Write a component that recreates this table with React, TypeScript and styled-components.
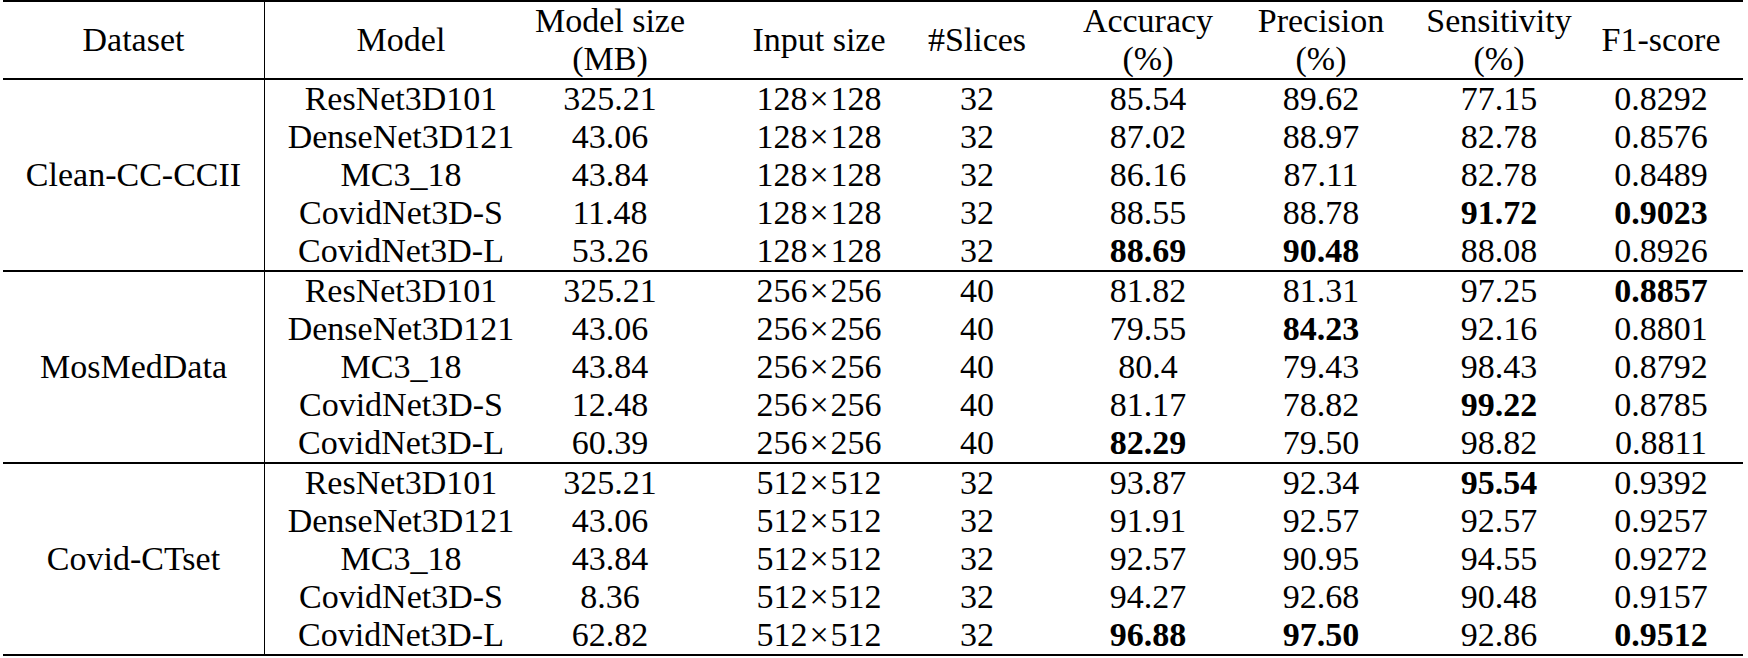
import React from "react";
import styled, { createGlobalStyle } from "styled-components";

const GlobalStyle = createGlobalStyle`
  html, body { margin: 0; padding: 0; background: #ffffff; }
  body {
    font-family: "Liberation Serif", "Times New Roman", serif;
    color: #000000;
  }
`;

type Col = { center: number; width: number };

const LEFT = 3;
const LINE = 265;
const END = 1743;
const ROW_H = 38;

const COLS: Col[] = [
  { center: 401, width: 250 },
  { center: 610, width: 160 },
  { center: 819, width: 150 },
  { center: 977, width: 110 },
  { center: 1148, width: 140 },
  { center: 1321, width: 140 },
  { center: 1499, width: 156 },
  { center: 1661, width: 130 },
];

const TEMPLATE = (() => {
  const parts: string[] = [];
  let pos = LINE;
  COLS.forEach((c) => {
    const s = c.center - c.width / 2;
    parts.push(`${s - pos}px`, `${c.width}px`);
    pos = s + c.width;
  });
  parts.push(`${END - pos}px`);
  return parts.join(" ");
})();

const Table = styled.div`
  margin-left: ${LEFT}px;
  width: ${END - LEFT}px;
  border-top: 2px solid #000;
  border-bottom: 2px solid #000;
  font-family: "Liberation Serif", "Times New Roman", serif;
  font-size: 34px;
  line-height: ${ROW_H}px;
  color: #000;
`;

const HeaderRow = styled.div`
  display: flex;
  height: ${ROW_H * 2}px;
  border-bottom: 2px solid #000;
`;

const Group = styled.div<{ $last?: boolean }>`
  display: flex;
  border-bottom: ${(p) => (p.$last ? "none" : "2px solid #000")};
`;

const DatasetCell = styled.div`
  box-sizing: border-box;
  width: ${LINE - LEFT}px;
  flex: none;
  border-right: 1.5px solid #000;
  display: flex;
  align-items: center;
  justify-content: center;
  white-space: nowrap;
`;

const Rows = styled.div`
  display: flex;
  flex-direction: column;
  flex: 1;
`;

const Grid = styled.div<{ $height: number }>`
  display: grid;
  grid-template-columns: ${TEMPLATE};
  height: ${(p) => p.$height}px;
  flex: 1;
`;

const Cell = styled.div<{ $col: number; $bold?: boolean }>`
  grid-column: ${(p) => p.$col * 2 + 2};
  display: flex;
  flex-direction: column;
  align-items: center;
  justify-content: center;
  text-align: center;
  white-space: nowrap;
  font-weight: ${(p) => (p.$bold ? 700 : 400)};
`;

const Times = styled.span`
  margin: 0 2px;
`;

type Row = (string | { b: string })[];

const groups: { name: string; rows: Row[] }[] = [
  {
    name: "Clean-CC-CCII",
    rows: [
      ["ResNet3D101", "325.21", "128×128", "32", "85.54", "89.62", "77.15", "0.8292"],
      ["DenseNet3D121", "43.06", "128×128", "32", "87.02", "88.97", "82.78", "0.8576"],
      ["MC3_18", "43.84", "128×128", "32", "86.16", "87.11", "82.78", "0.8489"],
      ["CovidNet3D-S", "11.48", "128×128", "32", "88.55", "88.78", { b: "91.72" }, { b: "0.9023" }],
      ["CovidNet3D-L", "53.26", "128×128", "32", { b: "88.69" }, { b: "90.48" }, "88.08", "0.8926"],
    ],
  },
  {
    name: "MosMedData",
    rows: [
      ["ResNet3D101", "325.21", "256×256", "40", "81.82", "81.31", "97.25", { b: "0.8857" }],
      ["DenseNet3D121", "43.06", "256×256", "40", "79.55", { b: "84.23" }, "92.16", "0.8801"],
      ["MC3_18", "43.84", "256×256", "40", "80.4", "79.43", "98.43", "0.8792"],
      ["CovidNet3D-S", "12.48", "256×256", "40", "81.17", "78.82", { b: "99.22" }, "0.8785"],
      ["CovidNet3D-L", "60.39", "256×256", "40", { b: "82.29" }, "79.50", "98.82", "0.8811"],
    ],
  },
  {
    name: "Covid-CTset",
    rows: [
      ["ResNet3D101", "325.21", "512×512", "32", "93.87", "92.34", { b: "95.54" }, "0.9392"],
      ["DenseNet3D121", "43.06", "512×512", "32", "91.91", "92.57", "92.57", "0.9257"],
      ["MC3_18", "43.84", "512×512", "32", "92.57", "90.95", "94.55", "0.9272"],
      ["CovidNet3D-S", "8.36", "512×512", "32", "94.27", "92.68", "90.48", "0.9157"],
      ["CovidNet3D-L", "62.82", "512×512", "32", { b: "96.88" }, { b: "97.50" }, "92.86", { b: "0.9512" }],
    ],
  },
];

const headers: string[][] = [
  ["Model"],
  ["Model size", "(MB)"],
  ["Input size"],
  ["#Slices"],
  ["Accuracy", "(%)"],
  ["Precision", "(%)"],
  ["Sensitivity", "(%)"],
  ["F1-score"],
];

function renderValue(v: string) {
  const parts = v.split("×");
  if (parts.length !== 2) return v;
  return (
    <span>
      {parts[0]}
      <Times>×</Times>
      {parts[1]}
    </span>
  );
}

export default function App() {
  return (
    <>
      <GlobalStyle />
      <Table>
        <HeaderRow>
          <DatasetCell>Dataset</DatasetCell>
          <Grid $height={ROW_H * 2}>
            {headers.map((lines, i) => (
              <Cell key={i} $col={i}>
                {lines.map((l) => (
                  <span key={l}>{l}</span>
                ))}
              </Cell>
            ))}
          </Grid>
        </HeaderRow>
        {groups.map((g, gi) => (
          <Group key={g.name} $last={gi === groups.length - 1}>
            <DatasetCell>{g.name}</DatasetCell>
            <Rows>
              {g.rows.map((r, ri) => (
                <Grid key={ri} $height={ROW_H}>
                  {r.map((v, ci) =>
                    typeof v === "string" ? (
                      <Cell key={ci} $col={ci}>
                        {renderValue(v)}
                      </Cell>
                    ) : (
                      <Cell key={ci} $col={ci} $bold>
                        {v.b}
                      </Cell>
                    )
                  )}
                </Grid>
              ))}
            </Rows>
          </Group>
        ))}
      </Table>
    </>
  );
}
